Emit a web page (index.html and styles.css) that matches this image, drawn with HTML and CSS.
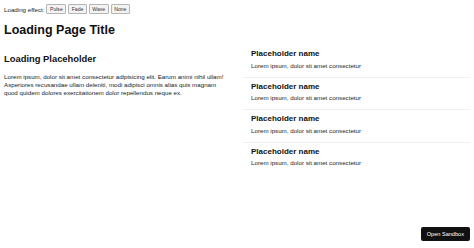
FILE: index.html
```html
<!doctype html>
<html lang="en">
<head>
	<meta charset="UTF-8">
	<title>Loading Placeholder</title>
	<link rel="stylesheet" href="styles.css">
</head>
<body>
	<div class="controls">
		Loading effect:
		<button type="button">Pulse</button>
		<button type="button">Fade</button>
		<button type="button">Wave</button>
		<button type="button">None</button>
	</div>
	<h1 class="page-title">Loading Page Title</h1>
	<div class="layout">
		<section class="main">
			<h2>Loading Placeholder</h2>
			<p>Lorem ipsum, dolor sit amet consectetur adipisicing elit. Earum animi nihil ullam! Asperiores recusandae ullam deleniti, modi adipisci omnis alias quis magnam quod quidem dolores exercitationem dolor repellendus neque ex.</p>
		</section>
		<ul class="list">
			<li class="item">
				<h3>Placeholder name</h3>
				<p>Lorem ipsum, dolor sit amet consectetur</p>
			</li>
			<li class="item">
				<h3>Placeholder name</h3>
				<p>Lorem ipsum, dolor sit amet consectetur</p>
			</li>
			<li class="item">
				<h3>Placeholder name</h3>
				<p>Lorem ipsum, dolor sit amet consectetur</p>
			</li>
			<li class="item">
				<h3>Placeholder name</h3>
				<p>Lorem ipsum, dolor sit amet consectetur</p>
			</li>
		</ul>
	</div>
	<a class="sandbox" href="#">Open Sandbox</a>
</body>
</html>
```
FILE: styles.css
```css
body {
	margin:4px;
	font:6.2px "Liberation Sans", Arial, sans-serif;
	color:#222;
	background:#fff;
}

.controls {
	display:flex;
	align-items:center;
	gap:2px;
	height:10px;
}

.controls button {
	font:5.1px "Liberation Sans", Arial, sans-serif;
	color:#333;
	background:#f3f3f3;
	border:1px solid #b5b5b5;
	border-radius:1px;
	padding:1px 2.5px;
	height:9.5px;
	line-height:5px;
}

.page-title {
	font-size:12.5px;
	margin:9px 0 0;
	color:#111;
}

.layout {
	display:grid;
	grid-template-columns:1fr 1fr;
	margin-top:8px;
}

.main h2 {
	font-size:9.4px;
	margin:8px 0 9px;
	color:#111;
}

.main p {
	margin:0;
	line-height:8px;
	padding-right:10px;
}

.list {
	list-style:none;
	margin:0;
	padding:0 0 0 6px;
}

.item {
	padding:4px 0 8px 8px;
	border-bottom:1px solid #f0f0f0;
}

.item:last-child {
	border-bottom:none;
}

.item h3 {
	font-size:8px;
	margin:0 0 3.5px;
	color:#111;
}

.item p {
	margin:0;
}

.sandbox {
	position:fixed;
	right:4px;
	bottom:7px;
	background:#111;
	color:#fff;
	font-size:5.6px;
	text-decoration:none;
	padding:4px 6px;
	border-radius:2px;
}
```
